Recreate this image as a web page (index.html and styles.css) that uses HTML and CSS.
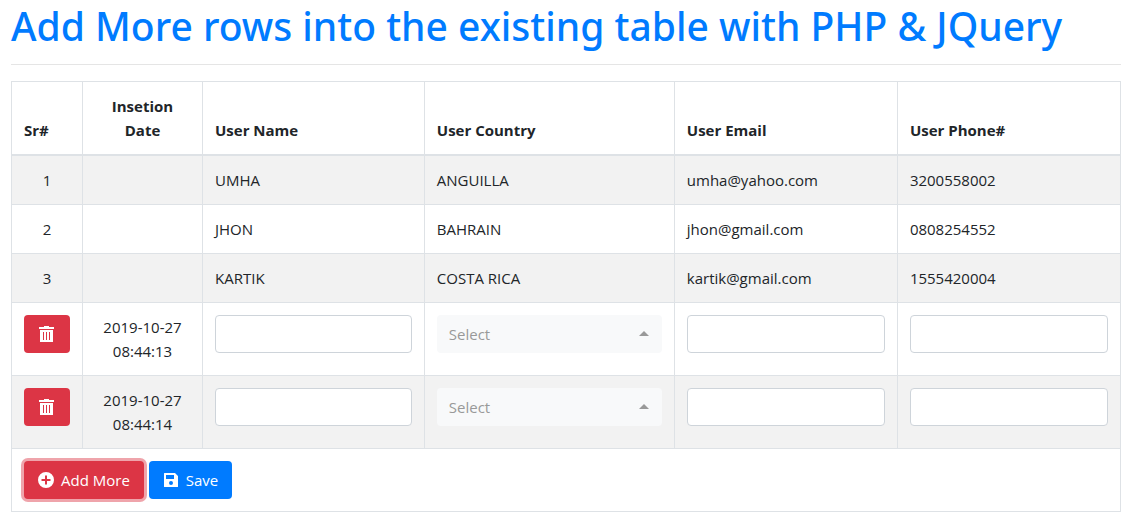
FILE: index.html
```
<!DOCTYPE html>
<html lang="en">
<head>
    <meta charset="UTF-8">
    <meta name="viewport" content="width=device-width, initial-scale=1.0">
    <title>Add More rows with PHP &amp; JQuery</title>
    <link rel="stylesheet" href="styles.css">
</head>
<body>
    <h1>Add More rows into the existing table with PHP &amp; JQuery</h1>
    <hr>

    <form>
        <table class="table">
            <colgroup>
                <col class="col-sr">
                <col class="col-date">
                <col class="col-name">
                <col class="col-country">
                <col>
                <col>
            </colgroup>
            <thead>
                <tr>
                    <th>Sr#</th>
                    <th class="text-center">Insetion Date</th>
                    <th>User Name</th>
                    <th>User Country</th>
                    <th>User Email</th>
                    <th>User Phone#</th>
                </tr>
            </thead>
            <tbody>
                <tr>
                    <td class="text-center">1</td>
                    <td></td>
                    <td>UMHA</td>
                    <td>ANGUILLA</td>
                    <td>umha@yahoo.com</td>
                    <td>3200558002</td>
                </tr>
                <tr>
                    <td class="text-center">2</td>
                    <td></td>
                    <td>JHON</td>
                    <td>BAHRAIN</td>
                    <td>jhon@gmail.com</td>
                    <td>0808254552</td>
                </tr>
                <tr>
                    <td class="text-center">3</td>
                    <td></td>
                    <td>KARTIK</td>
                    <td>COSTA RICA</td>
                    <td>kartik@gmail.com</td>
                    <td>1555420004</td>
                </tr>
                <tr>
                    <td>
                        <button type="button" class="btn btn-danger btn-block" aria-label="Delete row">
                            <svg class="icon" viewBox="0 0 16 16"><path fill-rule="evenodd" d="M5 0h5v1h5v2H0V1h5zM1 4h13v12H1zM4 6v8h1V6zM7 6v8h1V6zM10 6v8h1V6z"/></svg>
                        </button>
                    </td>
                    <td class="text-center">2019-10-27 08:44:13</td>
                    <td><input type="text" class="form-control" name="name[]" aria-label="User Name"></td>
                    <td>
                        <div class="select">
                            <select name="country[]" aria-label="User Country"><option>Select</option></select>
                        </div>
                    </td>
                    <td><input type="text" class="form-control" name="email[]" aria-label="User Email"></td>
                    <td><input type="text" class="form-control" name="phone[]" aria-label="User Phone"></td>
                </tr>
                <tr>
                    <td>
                        <button type="button" class="btn btn-danger btn-block" aria-label="Delete row">
                            <svg class="icon" viewBox="0 0 16 16"><path fill-rule="evenodd" d="M5 0h5v1h5v2H0V1h5zM1 4h13v12H1zM4 6v8h1V6zM7 6v8h1V6zM10 6v8h1V6z"/></svg>
                        </button>
                    </td>
                    <td class="text-center">2019-10-27 08:44:14</td>
                    <td><input type="text" class="form-control" name="name[]" aria-label="User Name"></td>
                    <td>
                        <div class="select">
                            <select name="country[]" aria-label="User Country"><option>Select</option></select>
                        </div>
                    </td>
                    <td><input type="text" class="form-control" name="email[]" aria-label="User Email"></td>
                    <td><input type="text" class="form-control" name="phone[]" aria-label="User Phone"></td>
                </tr>
            </tbody>
            <tfoot>
                <tr>
                    <td colspan="6">
                        <div class="actions">
                            <button type="button" class="btn btn-danger active">
                                <svg class="icon" viewBox="0 0 16 16"><path fill-rule="evenodd" d="M8 0a8 8 0 1 0 0 16A8 8 0 0 0 8 0zM7 3.500h2V7h3.500v2H9v3.500H7V9H3.500V7H7z"/></svg>
                                Add More
                            </button>
                            <button type="submit" class="btn btn-primary">
                                <svg class="icon" viewBox="0 0 16 16"><path fill-rule="evenodd" d="M1.500 1H12l3 3v10.500a.5.500 0 0 1-.5.500h-13a.5.500 0 0 1-.5-.5v-13a.5.500 0 0 1 .5-.5zM3 3v4h8V3zM8 9a2 2 0 1 0 0 4 2 2 0 0 0 0-4z"/></svg>
                                Save
                            </button>
                        </div>
                    </td>
                </tr>
            </tfoot>
        </table>
    </form>
</body>
</html>
```
FILE: styles.css
```
* {
    box-sizing: border-box;
}

body {
    margin: 0;
    padding: 0 10px 0 11px;
    font-family: "Open Sans", "Noto Sans", sans-serif;
    font-size: 15px;
    line-height: 24px;
    color: #212529;
    background: #fff;
}

h1 {
    margin: 0;
    font-family: "Noto Sans", "Open Sans", sans-serif;
    font-size: 39px;
    font-weight: 500;
    line-height: 52px;
    color: #007bff;
}

hr {
    margin: 12px 0 16px;
    border: 0;
    border-top: 1px solid #e5e5e5;
}

.table {
    width: 100%;
    table-layout: fixed;
    border-collapse: collapse;
}

.col-sr {
    width: 71px;
}

.col-date {
    width: 120px;
}

.col-name {
    width: 20%;
}

.col-country {
    width: 250px;
}

.table th,
.table td {
    padding: 12px;
    border: 1px solid #dee2e6;
    text-align: left;
    vertical-align: top;
}

.table th {
    font-weight: 700;
    vertical-align: bottom;
    border-bottom-width: 2px;
}

.table tbody tr:nth-child(odd) {
    background: #f2f2f2;
}

.table .text-center {
    text-align: center;
}

.btn {
    display: flex;
    align-items: center;
    justify-content: center;
    gap: 7px;
    height: 38px;
    padding: 0 14px;
    border: 0;
    border-radius: 4px;
    font: inherit;
    color: #fff;
}

.btn-danger {
    background: #dc3545;
}

.btn-primary {
    background: #007bff;
}

.btn-block {
    width: 100%;
}

.btn.active {
    box-shadow: 0 0 0 3px rgba(220, 53, 69, 0.45);
}

.icon {
    width: 16px;
    height: 16px;
    flex: none;
    fill: currentColor;
}

.form-control {
    display: block;
    width: 100%;
    height: 38px;
    padding: 6px 12px;
    border: 1px solid #ced4da;
    border-radius: 4px;
    font: inherit;
    background: #fff;
}

.select {
    position: relative;
}

.select select {
    display: block;
    width: 100%;
    height: 38px;
    padding: 0 12px;
    border: 0;
    border-radius: 4px;
    appearance: none;
    font: inherit;
    color: #999;
    background: #f8f9fa;
}

/* caret pointing up */
.select::after {
    content: "";
    position: absolute;
    top: 16px;
    right: 13px;
    border: 5px solid transparent;
    border-top: 0;
    border-bottom-color: #999;
    pointer-events: none;
}

.actions {
    display: flex;
    gap: 5px;
}
```
